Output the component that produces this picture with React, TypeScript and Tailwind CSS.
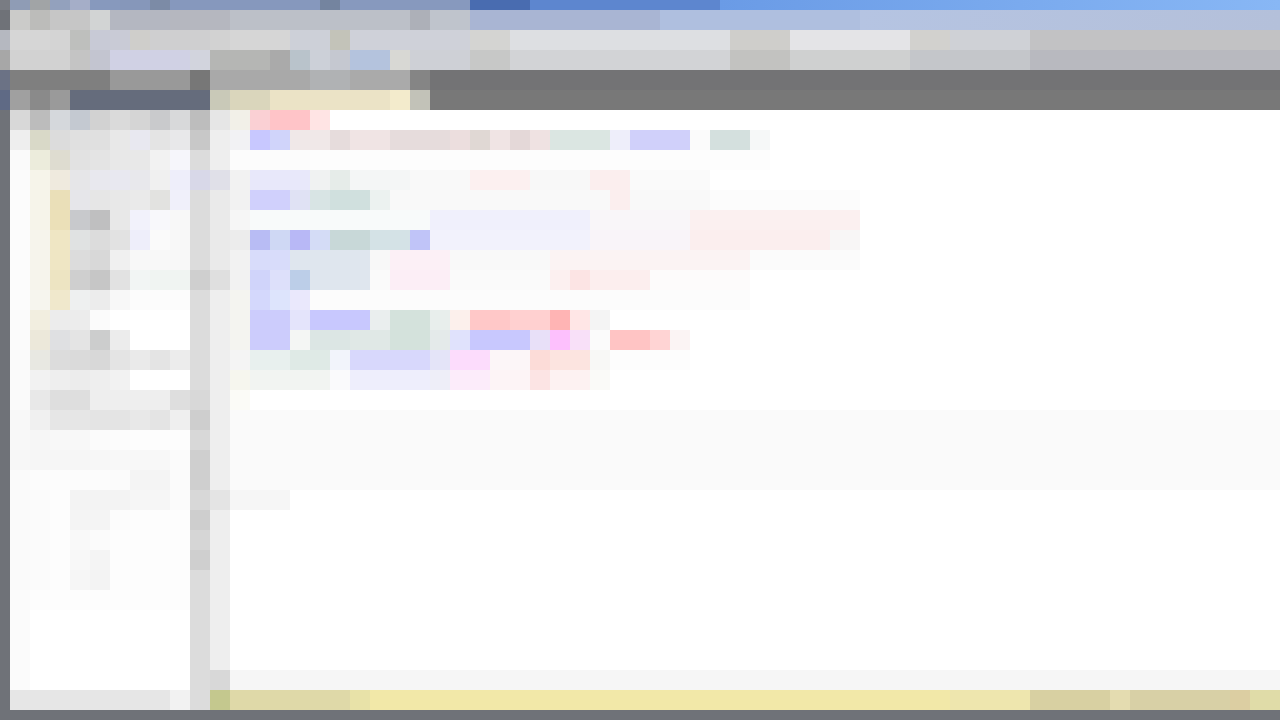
// The window is a mosaic of 20px blocks, offset by 10px from the page edge.
function Band({ cells, className = "h-5" }: { cells: string[]; className?: string }) {
  return (
    <div className={`flex shrink-0 ${className}`}>
      {cells.map((c, i) => (
        <div key={i} className={`shrink-0 ${c}`} />
      ))}
    </div>
  );
}

const titleCells = [
  "w-[10px] bg-[#797c83]", "w-5 bg-[#8f9cb5]", "w-5 bg-[#a1a4a6]", "w-5 bg-[#93a1bd]", "w-5 bg-[#a5aec8]",
  "w-[30px] bg-[#8799bd]", "w-[30px] bg-[#8697ba]", "w-[20px] bg-[#7c8ba6]", "w-[150px] bg-[#8698bd]",
  "w-[20px] bg-[#74849f]", "w-[130px] bg-[#8799be]",
  "w-[60px] bg-[#496cb0]", "w-[190px] bg-[#5d86cf]", "flex-1 bg-linear-to-r from-[#6a9be6] to-[#88b7f5]",
];

const menuTop = [
  "w-[10px] bg-[#6f7278]", "w-5 bg-[#cbcbc9]", "w-5 bg-[#bcbcba]", "w-[40px] bg-[#c6c6c6]", "w-5 bg-[#d2d4d4]",
  "w-[60px] bg-[#b4b7c1]", "w-[60px] bg-[#b5b7bf]", "w-[180px] bg-[#bcc0c8]", "w-[20px] bg-[#adb0b8]",
  "w-[40px] bg-[#bfc4cc]", "w-[190px] bg-[#a9b5d3]", "w-[200px] bg-[#afbfdf]", "flex-1 bg-linear-to-r from-[#b5c4e2] to-[#b4c0da]",
];

const menuRow = [
  "w-[10px] bg-[#b5b8c0]", "w-[40px] bg-[#d6d6d6]", "w-5 bg-[#d4d4d4]", "w-5 bg-[#bebfbd]", "w-5 bg-[#c8cad6]",
  "w-5 bg-[#c9cbd6]", "w-5 bg-[#cfcecb]", "w-[60px] bg-[#cfcfd0]", "w-5 bg-[#d2d2d2]", "w-[60px] bg-[#d6d6d6]",
  "w-[40px] bg-[#cdd0d8]", "w-5 bg-[#c3c3b9]", "w-[120px] bg-[#cfd1d9]", "w-[40px] bg-[#d4d4d2]", "w-[220px] bg-[#dddfe2]",
  "w-[60px] bg-[#cfcecb]", "w-[120px] bg-[#e4e4e7]", "w-[40px] bg-[#d2d1ce]", "w-[80px] bg-[#cfd1d6]", "flex-1 bg-[#c2c2c4]",
];

const toolRow = [
  "w-[10px] bg-[#a7a7a7]", "w-[60px] bg-[#d2d2d2]", "w-5 bg-[#c4c4c4]", "w-5 bg-[#c3c5d0]", "w-[80px] bg-[#d0d1e4]",
  "w-5 bg-[#d2d4dd]", "w-[60px] bg-[#b5b6b4]", "w-5 bg-[#aaaaaa]", "w-5 bg-[#b9c3cb]", "w-5 bg-[#ccd0d8]", "w-5 bg-[#c5c8d0]",
  "w-[40px] bg-[#b4c3dd]", "w-5 bg-[#d8d8d4]", "w-[60px] bg-[#ced0d6]", "w-[40px] bg-[#c7c8c7]", "w-[220px] bg-[#d2d3d6]",
  "w-[60px] bg-[#c2c2c0]", "w-[120px] bg-[#cfd0d0]", "w-[120px] bg-[#c4c6ca]", "flex-1 bg-[#b8b9bf]",
];

const tabTop = [
  "w-[10px] bg-[#6b7285]", "w-[100px] bg-[#7f7f7f]", "w-[80px] bg-[#999999]", "w-5 bg-[#777777]", "w-[100px] bg-[#a9a9a9]",
  "w-[40px] bg-[#b0b2b4]", "w-[60px] bg-[#aaaaaa]", "w-5 bg-[#858585]", "flex-1 bg-[#737375]",
];

const tabRow = [
  "w-[10px] bg-[#5f6a85]", "w-5 bg-[#a0a0a0]", "w-5 bg-[#8a8a8a]", "w-5 bg-[#9a9a9a]", "w-[140px] bg-[#656c7c]",
  "w-5 bg-[#c9c9b8]", "w-[40px] bg-[#dad6bc]", "w-[120px] bg-[#ebe3c6]", "w-5 bg-[#f3ebcc]", "w-5 bg-[#c2c2b8]", "flex-1 bg-[#787878]",
];

// file tree, nine blocks per row from y=110
const treeCells = [
  "bg-[#d8d8d8]", "bg-[#bcbcbc]", "bg-[#d5d8dc]", "bg-[#c4c9d1]", "bg-[#d2d2d2]", "bg-[#dadada]", "bg-[#d5d5d5]", "bg-[#c9cacc]", "bg-[#d8d9da]",
  "bg-[#eeeeee]", "bg-[#d9d9c8]", "bg-[#dcdcdc]", "bg-[#e0e0e0]", "bg-[#e0e0e0]", "bg-[#e8e8e8]", "bg-[#e8e8f0]", "bg-[#e4e4e4]", "bg-[#e8e8ea]",
  "bg-[#fafafa]", "bg-[#ececdc]", "bg-[#dedcd0]", "bg-[#e2e2e2]", "bg-[#e4e4e4]", "bg-[#e8e8e8]", "bg-[#e8e8e8]", "bg-[#f2f2f2]", "bg-[#f6f6fb]",
  "bg-[#fbfbfb]", "bg-[#f6f4ea]", "bg-[#efeade]", "bg-[#e6e6e8]", "bg-[#e8e8ee]", "bg-[#e8e8f0]", "bg-[#e8e8ec]", "bg-[#f0f0f0]", "bg-[#eeeefa]",
  "bg-[#fcfcfc]", "bg-[#f6f4ea]", "bg-[#eadfb8]", "bg-[#e6e6ea]", "bg-[#e6e6e6]", "bg-[#e8e8e8]", "bg-[#eaeaea]", "bg-[#e2e2e0]", "bg-[#f0f0fa]",
  "bg-[#fcfcfc]", "bg-[#f6f4ea]", "bg-[#ebe0b8]", "bg-[#c8c9cc]", "bg-[#bfbfc0]", "bg-[#e8e8e8]", "bg-[#f2f2fb]", "bg-[#f8f8fb]", "bg-[#f8f8f8]",
  "bg-[#fcfcfc]", "bg-[#f6f4ec]", "bg-[#efe6c4]", "bg-[#e0e2e2]", "bg-[#dcdcdc]", "bg-[#e2e2e2]", "bg-[#eeeefa]", "bg-[#fafafa]", "bg-[#f8f8f8]",
  "bg-[#fcfcfc]", "bg-[#f6f4ec]", "bg-[#efe6c4]", "bg-[#dcdcdc]", "bg-[#d8d8d8]", "bg-[#f0f0f0]", "bg-[#f8f8f8]", "bg-[#f8f8f8]", "bg-[#f8f8f8]",
  "bg-[#fcfcfc]", "bg-[#f6f4ec]", "bg-[#ede4c2]", "bg-[#cfcfcf]", "bg-[#c6c6c6]", "bg-[#e2e2e2]", "bg-[#f2f5f4]", "bg-[#f0f4f2]", "bg-[#f0f4f2]",
  "bg-[#fcfcfc]", "bg-[#f6f5ee]", "bg-[#f0e8cc]", "bg-[#eef0f0]", "bg-[#ececec]", "bg-[#f8f8f8]", "bg-[#fcfcfc]", "bg-[#fcfcfc]", "bg-[#fcfcfc]",
  "bg-[#fbfbfb]", "bg-[#f2eee0]", "bg-[#ececec]", "bg-[#ececec]", "bg-[#fbfbfb]", "bg-white", "bg-white", "bg-white", "bg-white",
  "bg-[#fbfbfb]", "bg-[#ece8da]", "bg-[#dfe0e2]", "bg-[#e4e4e4]", "bg-[#cccdcd]", "bg-[#ececec]", "bg-white", "bg-white", "bg-white",
  "bg-[#fafafa]", "bg-[#e8e8e2]", "bg-[#dcdcdc]", "bg-[#dadada]", "bg-[#d8d8d8]", "bg-[#e4e4e4]", "bg-[#eaeaea]", "bg-[#e4e4e4]", "bg-[#ececec]",
  "bg-[#fafafa]", "bg-[#f2f2f2]", "bg-[#eeeeee]", "bg-[#ececec]", "bg-[#eeeeee]", "bg-[#f2f2f2]", "bg-white", "bg-white", "bg-white",
  "bg-[#fafafa]", "bg-[#e8e8e8]", "bg-[#dedede]", "bg-[#dedede]", "bg-[#eeeeee]", "bg-[#eeeeee]", "bg-[#eeeeee]", "bg-[#eeeeee]", "bg-[#dedede]",
  "bg-[#f8f8f8]", "bg-[#f0f0f0]", "bg-[#e6e6e6]", "bg-[#e6e6e6]", "bg-[#e4e4e4]", "bg-[#e4e4e4]", "bg-[#e8e8e8]", "bg-[#e4e4e4]", "bg-[#efefef]",
  "bg-[#f8f8f8]", "bg-[#f6f6f6]", "bg-[#f8f8f8]", "bg-[#f8f8f8]", "bg-[#fbfbfb]", "bg-[#fcfcfc]", "bg-[#fdfdfd]", "bg-[#fdfdfd]", "bg-[#fdfdfd]",
  "bg-[#f7f7f7]", "bg-[#f6f6f6]", "bg-[#f6f6f6]", "bg-[#f6f6f6]", "bg-[#f7f7f7]", "bg-[#f8f8f8]", "bg-[#f8f8f8]", "bg-[#f8f8f8]", "bg-[#fbfbfb]",
  "bg-[#fafafa]", "bg-[#fcfcfc]", "bg-[#fcfcfc]", "bg-[#fcfcfc]", "bg-[#fcfcfc]", "bg-[#fbfbfb]", "bg-[#f4f4f4]", "bg-[#f4f4f4]", "bg-[#fbfbfb]",
  "bg-[#fafafa]", "bg-[#fbfbfb]", "bg-[#fdfdfd]", "bg-[#f3f3f3]", "bg-[#f3f3f3]", "bg-[#f3f3f3]", "bg-[#f6f6f6]", "bg-[#f6f6f6]", "bg-[#fbfbfb]",
  "bg-[#fafafa]", "bg-[#fbfbfb]", "bg-[#fdfdfd]", "bg-[#f4f4f4]", "bg-[#f4f4f4]", "bg-[#fcfcfc]", "bg-[#fdfdfd]", "bg-[#fdfdfd]", "bg-[#fdfdfd]",
  "bg-[#fafafa]", "bg-[#fbfbfb]", "bg-[#fdfdfd]", "bg-[#f9f9f9]", "bg-[#fbfbfb]", "bg-[#fdfdfd]", "bg-[#fdfdfd]", "bg-[#fdfdfd]", "bg-[#fdfdfd]",
  "bg-[#fafafa]", "bg-[#fbfbfb]", "bg-[#fdfdfd]", "bg-[#f8f8f8]", "bg-[#f4f4f4]", "bg-[#fdfdfd]", "bg-[#fdfdfd]", "bg-[#fdfdfd]", "bg-[#fdfdfd]",
  "bg-[#fafafa]", "bg-[#fbfbfb]", "bg-[#fdfdfd]", "bg-[#f6f6f6]", "bg-[#f3f3f3]", "bg-[#fdfdfd]", "bg-[#fdfdfd]", "bg-[#fdfdfd]", "bg-[#fdfdfd]",
  "bg-[#fbfbfb]", "bg-[#fdfdfd]", "bg-[#fdfdfd]", "bg-[#fdfdfd]", "bg-[#fdfdfd]", "bg-[#fdfdfd]", "bg-[#fdfdfd]", "bg-[#fdfdfd]", "bg-[#fdfdfd]",
];

const splitter = [
  "h-5 bg-[#bdbdbd]", "h-5 bg-[#c8c8c8]", "h-5 bg-[#dcdcdc]", "h-5 bg-[#d8d8e8]", "h-[80px] bg-[#dcdcdc]", "h-5 bg-[#cfcfcf]",
  "h-[100px] bg-[#dcdcdc]", "h-5 bg-[#d8d8d8]", "h-5 bg-[#cecece]", "h-5 bg-[#d8d8d8]", "h-[40px] bg-[#cfcfcf]", "h-5 bg-[#d8d8d8]",
  "h-5 bg-[#cecece]", "h-5 bg-[#d6d6d6]", "h-5 bg-[#cfcfcf]", "flex-1 bg-[#dcdcdc]",
];

const gutter = [
  "h-5 bg-[#e6e6e6]", "h-[40px] bg-[#eeeeee]", "h-5 bg-[#e0e0e8]", "h-[80px] bg-[#eaeaea]", "h-5 bg-[#dfdfdf]", "h-[200px] bg-[#eeeeee]",
  "h-5 bg-[#e4e4e4]", "h-[160px] bg-[#eeeeee]", "h-5 bg-[#d8d8d8]", "flex-1 bg-[#c4c88e]",
];

// code lines, first block starts at x=230
const codeLines = [
  ["w-5 bg-[#f2f0e8]", "w-5 bg-[#fad0d4]", "w-[40px] bg-[#ffc4c8]", "w-5 bg-[#ffe4e4]"],
  ["w-5 bg-[#f2f2f4]", "w-5 bg-[#c8c8ff]", "w-5 bg-[#d0d4fa]", "w-[40px] bg-[#f0e8e8]", "w-5 bg-[#e6dcdc]", "w-[40px] bg-[#f0e4e4]", "w-[60px] bg-[#e6dcdc]", "w-5 bg-[#ecdede]", "w-5 bg-[#e0d8d4]", "w-5 bg-[#f0e4e4]", "w-5 bg-[#e4d8d8]", "w-5 bg-[#efe2e2]", "w-[60px] bg-[#dbe6e2]", "w-5 bg-[#eeeefa]", "w-[60px] bg-[#d0d0fa]", "w-5 bg-[#fbfbfb]", "w-[40px] bg-[#d4e0de]", "w-5 bg-[#f6f8f8]"],
  ["w-[80px] bg-[#fcfcfc]", "w-[460px] bg-[#fdfdfd]"],
  ["w-5 bg-[#f2f2f2]", "w-[60px] bg-[#e8e8fa]", "w-5 bg-[#f0f2f2]", "w-5 bg-[#e6ece9]", "w-[60px] bg-[#f4f6f6]", "w-[60px] bg-[#f9f9f9]", "w-[60px] bg-[#fcf0f0]", "w-[60px] bg-[#f8f8f8]", "w-[40px] bg-[#fbeeee]", "w-[80px] bg-[#fafafa]"],
  ["w-5 bg-[#f2f2f2]", "w-[40px] bg-[#d0d0fc]", "w-5 bg-[#e0e2f4]", "w-5 bg-[#d8e4e4]", "w-[40px] bg-[#d0e0de]", "w-5 bg-[#ecf2f0]", "w-[220px] bg-[#f9f9f9]", "w-5 bg-[#fbeeee]", "w-[80px] bg-[#f9f9f9]", "w-[150px] bg-[#fcfcfc]"],
  ["w-5 bg-[#f6f6f6]", "w-[180px] bg-[#f8fafa]", "w-[160px] bg-[#f0f0fc]", "w-[100px] bg-[#f9f6f9]", "w-[170px] bg-[#fbf0f0]"],
  ["w-5 bg-[#ececec]", "w-5 bg-[#b8bcf4]", "w-5 bg-[#cfd8f4]", "w-5 bg-[#b8b8f6]", "w-5 bg-[#d4dcf6]", "w-[40px] bg-[#c8d8d8]", "w-[40px] bg-[#d4e2e6]", "w-5 bg-[#c0c4f8]", "w-[160px] bg-[#f2f2fc]", "w-[100px] bg-[#f9f4f9]", "w-[140px] bg-[#fbeeee]", "w-[30px] bg-[#f8f6f6]"],
  ["w-5 bg-[#f2f2f2]", "w-[40px] bg-[#d8dcfa]", "w-[80px] bg-[#dfe6ee]", "w-5 bg-[#f8f8f8]", "w-[60px] bg-[#fcf0f6]", "w-[100px] bg-[#f9f9f9]", "w-[200px] bg-[#fbf3f3]", "w-[110px] bg-[#fbfbfb]"],
  ["w-5 bg-[#f2f2f2]", "w-5 bg-[#d0d4fa]", "w-5 bg-[#dde0fa]", "w-5 bg-[#bccee8]", "w-[60px] bg-[#dfe6ee]", "w-5 bg-[#fafafa]", "w-[60px] bg-[#fceef6]", "w-[100px] bg-[#fafafa]", "w-5 bg-[#fcf0f0]", "w-5 bg-[#fce4e4]", "w-[60px] bg-[#fceeee]", "w-[100px] bg-[#fdfbfb]"],
  ["w-5 bg-[#f4f4f0]", "w-5 bg-[#d4d8fc]", "w-5 bg-[#dde4fc]", "w-5 bg-[#eae8fc]", "w-[440px] bg-[#fcfcfc]"],
  ["w-5 bg-[#f4f4f0]", "w-[40px] bg-[#ccccfc]", "w-5 bg-[#e4e4fb]", "w-[60px] bg-[#c8c8fe]", "w-5 bg-[#eaeeee]", "w-[40px] bg-[#d4e2dc]", "w-5 bg-[#e8eeec]", "w-5 bg-[#fcf0ec]", "w-[40px] bg-[#ffc8c8]", "w-[40px] bg-[#ffd0d0]", "w-5 bg-[#ffb4b4]", "w-5 bg-[#ffe6e6]", "w-5 bg-[#f4f4f4]"],
  ["w-5 bg-[#f4f4f0]", "w-[40px] bg-[#ccccfc]", "w-5 bg-[#f4f6f4]", "w-[40px] bg-[#dce6e4]", "w-[40px] bg-[#e0e8e6]", "w-[40px] bg-[#d4e2dc]", "w-5 bg-[#e4eaea]", "w-5 bg-[#e0e2fc]", "w-[60px] bg-[#c8c8fe]", "w-5 bg-[#e8e0f8]", "w-5 bg-[#fdc0fd]", "w-5 bg-[#f8e0f8]", "w-5 bg-[#fbfbfb]", "w-[40px] bg-[#ffc4c4]", "w-5 bg-[#ffd4d4]", "w-5 bg-[#fbf4f4]"],
  ["w-5 bg-[#f4f4f4]", "w-[40px] bg-[#e8f0ee]", "w-[40px] bg-[#dfeae6]", "w-5 bg-[#f2f4fb]", "w-[80px] bg-[#d8d8fc]", "w-5 bg-[#e4e4f8]", "w-[40px] bg-[#fcdcfc]", "w-[40px] bg-[#fcf6f8]", "w-5 bg-[#fcdcd8]", "w-[40px] bg-[#fce4e0]", "w-5 bg-[#f8f8f6]", "w-[80px] bg-[#fdfdfd]"],
  ["w-5 bg-[#f6f6ee]", "w-[80px] bg-[#f2f4f2]", "w-5 bg-[#fafafc]", "w-[80px] bg-[#eeeefc]", "w-5 bg-[#eeeef8]", "w-[40px] bg-[#fcecfa]", "w-[40px] bg-[#fdf4f6]", "w-5 bg-[#fce4e4]", "w-[40px] bg-[#fdf2f2]", "w-5 bg-[#fafaf8]"],
  ["w-5 bg-[#fbfbf7]"],
];

const statusCells = [
  "w-[120px] bg-[#dfd9a8]", "w-5 bg-[#e8e2a8]", "w-[580px] bg-[#f2e8a8]", "w-[80px] bg-[#eee6ae]", "w-[80px] bg-[#d8d0a2]",
  "w-5 bg-[#e4dcb0]", "w-[100px] bg-[#d8d0a6]", "w-5 bg-[#dccea2]", "flex-1 bg-[#e0dca8]",
];

function Sidebar() {
  return (
    <div className="flex w-[180px] shrink-0 flex-col bg-white">
      <div className="grid grid-cols-9 auto-rows-[20px]">
        {treeCells.map((c, i) => (
          <div key={i} className={c} />
        ))}
      </div>
      <div className="flex-1 border-l-[20px] border-[#fbfbfb]" />
      <div className="flex h-5 shrink-0">
        <div className="flex-1 bg-[#e6e6e6]" />
        <div className="w-5 bg-[#f2f2f2]" />
      </div>
    </div>
  );
}

function Editor() {
  return (
    <div className="flex min-w-0 flex-1 flex-col bg-white">
      {codeLines.map((line, i) => (
        <Band key={i} cells={line} />
      ))}
      <div className="h-[80px] shrink-0 bg-[#fafafa]" />
      <Band cells={["w-[60px] bg-[#f6f6f6]"]} />
      <div className="flex-1" />
      <div className="h-5 shrink-0 bg-[#f6f6f6]" />
      <Band cells={statusCells} />
    </div>
  );
}

export default function App() {
  return (
    <div className="flex h-screen w-full flex-col overflow-hidden bg-white">
      <Band cells={titleCells} className="h-[10px]" />
      <Band cells={menuTop} />
      <Band cells={menuRow} />
      <Band cells={toolRow} />
      <Band cells={tabTop} />
      <Band cells={tabRow} />
      <div className="flex min-h-0 flex-1">
        <div className="w-[10px] shrink-0 bg-[#6f7278]" />
        <Sidebar />
        <div className="flex w-5 shrink-0 flex-col">
          {splitter.map((c, i) => (
            <div key={i} className={c} />
          ))}
        </div>
        <div className="flex w-5 shrink-0 flex-col">
          {gutter.map((c, i) => (
            <div key={i} className={c} />
          ))}
        </div>
        <Editor />
      </div>
      <div className="h-[10px] shrink-0 bg-[#6f7278]" />
    </div>
  );
}
